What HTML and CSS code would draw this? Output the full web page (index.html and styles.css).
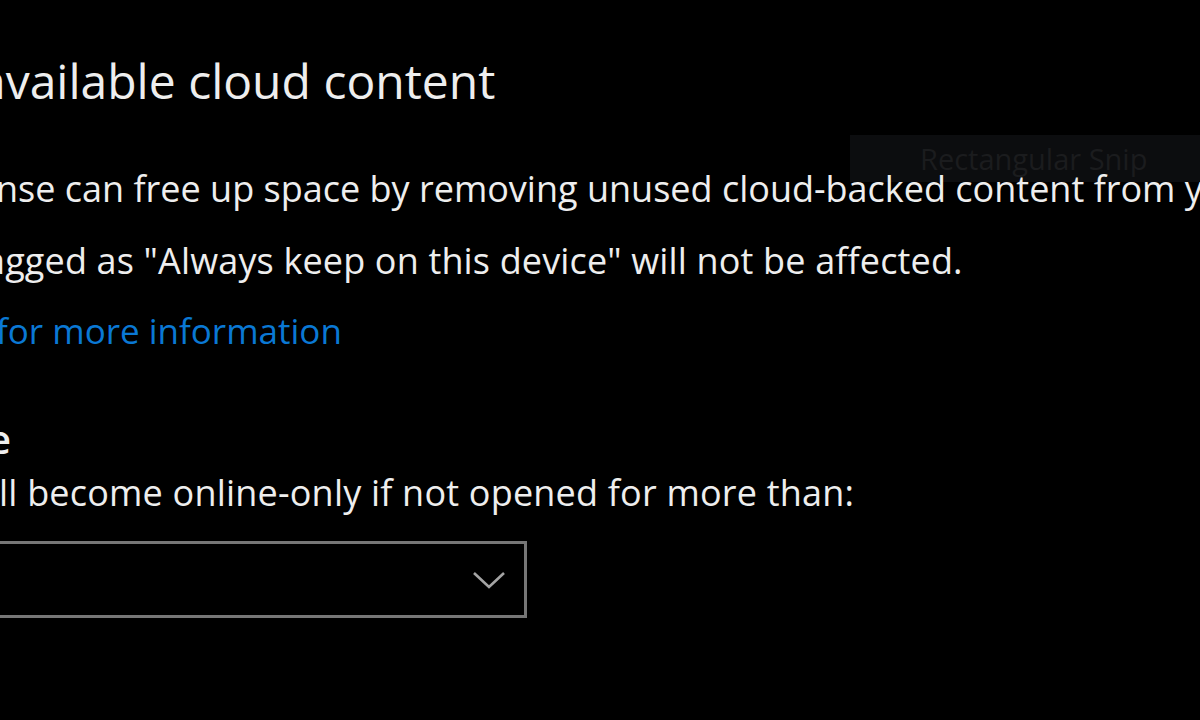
FILE: index.html
```html
<!DOCTYPE html>
<html lang="en">
<head>
<meta charset="utf-8">
<title>Storage Sense</title>
<link rel="stylesheet" href="styles.css">
</head>
<body>
<div class="tooltip"><span>Rectangular Snip</span></div>
<main class="page">
  <h1 class="title"><span class="cut cut-title">available cloud content</span></h1>
  <p class="body-line l1"><span class="cut cut-n">nse can free up space by removing unused cloud-backed content from y</span></p>
  <p class="body-line l2"><span class="cut cut-g">agged as "Always keep on this device" will not be affected.</span></p>
  <p class="link-line"><a class="cut cut-f" href="#">for more information</a></p>
  <h2 class="sub"><span class="cut cut-e">e</span></h2>
  <p class="body-line l3"><span class="cut cut-l">ll become online-only if not opened for more than:</span></p>
  <div class="select">
    <svg class="chev" width="34" height="18" viewBox="0 0 34 18"><path d="M2 2 L17 16 L32 2" fill="none" stroke="#a4a4a4" stroke-width="2.6"/></svg>
  </div>
</main>
</body>
</html>
```
FILE: styles.css
```css
html, body {
  margin: 0;
  padding: 0;
  background: #000;
  width: 1200px;
  height: 720px;
  overflow: hidden;
}
body {
  font-family: "Open Sans", "Noto Sans", sans-serif;
  color: #eeeeee;
  position: relative;
}
.page {
  position: relative;
  z-index: 1;
  display: flex;
  flex-direction: column;
  white-space: nowrap;
}
.cut { display: inline-block; }
.title {
  margin: 0;
  font-weight: 400;
  font-size: 48px;
  line-height: 50px;
  padding-top: 56px;
}
.cut-title { margin-left: -21px; }
.body-line {
  margin: 0;
  font-size: 36px;
  line-height: 40px;
}
.l1 { margin-top: 63px; }
.l2 { margin-top: 32px; }
.cut-n { margin-left: -4px; }
.cut-g { margin-left: -15px; letter-spacing: 0.15px; }
.link-line {
  margin: 30px 0 0;
  font-size: 35px;
  line-height: 40px;
}
.link-line a { color: #0a78d4; text-decoration: none; margin-left: -4px; }
.sub {
  margin: 66px 0 0;
  font-size: 40px;
  font-weight: 600;
  line-height: 44px;
}
.cut-e { margin-left: -12px; }
.l3 { margin-top: 12px; }
.cut-l { margin-left: -1px; letter-spacing: 0.2px; }
.select {
  margin-top: 28px;
  margin-left: -20px;
  width: 547px;
  height: 77px;
  box-sizing: border-box;
  border: 3px solid #767676;
  display: flex;
  align-items: center;
  justify-content: flex-end;
  padding-right: 18px;
}
.chev { display: block; }
.tooltip {
  position: absolute;
  left: 850px;
  top: 135px;
  width: 360px;
  height: 47px;
  background: #0c0d0f;
  z-index: 0;
  display: flex;
  align-items: center;
  padding-left: 70px;
  box-sizing: border-box;
  font-family: "Open Sans", sans-serif;
  font-size: 29px;
  color: #1b1c1e;
}
```
